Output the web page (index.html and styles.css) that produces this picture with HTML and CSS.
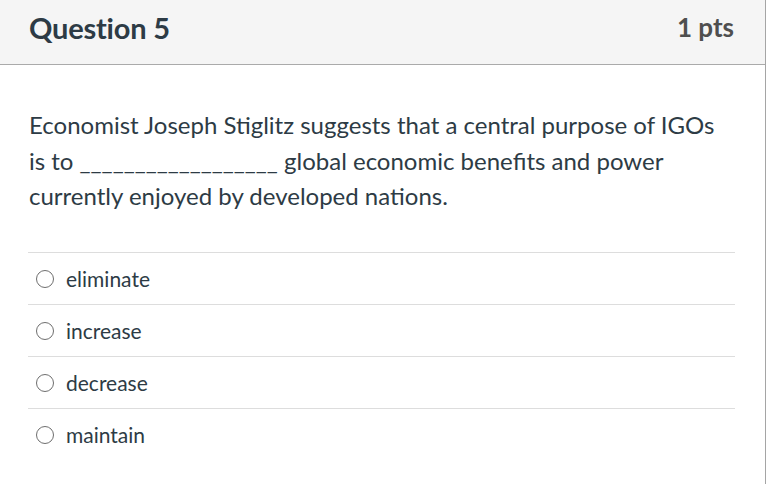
FILE: index.html
```html
<!DOCTYPE html>
<html lang="en">
<head>
<meta charset="utf-8">
<title>Question 5</title>
<link rel="stylesheet" href="styles.css">
</head>
<body>
<div class="question">
  <div class="question-header">
    <h2 class="question-title">Question 5</h2>
    <span class="question-points">1 pts</span>
  </div>
  <div class="question-body">
    <p class="question-text">Economist Joseph Stiglitz suggests that a central purpose of IGOs is to __________________ global economic benefits and power currently enjoyed by developed nations.</p>
    <div class="answers">
      <label class="answer"><span class="radio"></span><span class="answer-label">eliminate</span></label>
      <label class="answer"><span class="radio"></span><span class="answer-label">increase</span></label>
      <label class="answer"><span class="radio"></span><span class="answer-label">decrease</span></label>
      <label class="answer"><span class="radio"></span><span class="answer-label">maintain</span></label>
    </div>
  </div>
</div>
</body>
</html>
```
FILE: styles.css
```css
html, body {
  margin: 0;
  padding: 0;
  background: #fff;
}
body {
  font-family: Lato, "Open Sans", sans-serif;
  color: #2d3b45;
  width: 776px;
  height: 484px;
  overflow: hidden;
}
.question {
  width: 765px;
  height: 484px;
  border-right: 1px solid #a5a5a5;
  box-sizing: content-box;
}
.question-header {
  height: 64px;
  background: #f5f5f5;
  border-bottom: 1px solid #aaaaaa;
  display: flex;
  align-items: center;
  justify-content: space-between;
  padding: 0 31px 0 29px;
}
.question-title {
  margin: 0;
  font-size: 29px;
  font-weight: 700;
  color: #2d3b45;
  letter-spacing: -0.2px;
  position: relative;
  top: -5px;
}
.question-points {
  font-size: 26px;
  font-weight: 700;
  color: #4f4f4f;
  position: relative;
  top: -5px;
}
.question-body {
  padding: 0 30px 0 28px;
}
.question-text {
  margin: 0;
  padding: 42px 6px 0 1px;
  font-size: 24px;
  line-height: 35.5px;
  color: #2d3b45;
}
.answers {
  margin-top: 38px;
}
.answer {
  display: flex;
  align-items: center;
  height: 51px;
  border-top: 1px solid #dddddd;
}
.radio {
  width: 18px;
  height: 18px;
  box-sizing: border-box;
  border: 1.5px solid #6e6e6e;
  border-radius: 50%;
  margin: 1px 12px 0 8px;
  flex: none;
}
.answer-label {
  font-size: 21px;
  color: #2d3b45;
}
```
